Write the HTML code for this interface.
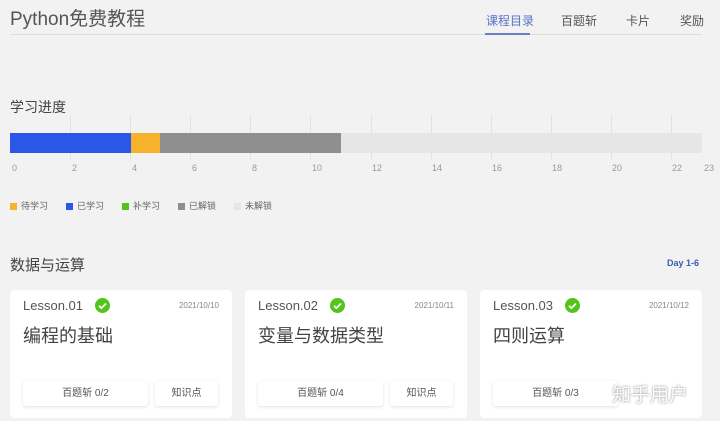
<!DOCTYPE html>
<html><head><meta charset="utf-8"><style>
*{margin:0;padding:0;box-sizing:border-box}
body{width:720px;height:421px;background:#f2f2f2;font-family:"Liberation Sans","Noto Sans CJK SC",sans-serif;position:relative;overflow:hidden;color:#333}
.a{position:absolute}
.tab{position:absolute;top:12px;font-size:12px;color:#555}
.tick{position:absolute;top:115px;width:1px;height:45px;background:#e2e2e2}
.num{position:absolute;top:163px;font-size:9px;color:#999}
.leg{position:absolute;top:199px;font-size:9px;color:#666}
.leg i{display:inline-block;width:7px;height:7px;margin-right:4px;vertical-align:-1px}
.card{position:absolute;top:290px;width:222px;height:128px;background:#fff;border-radius:4px}
.card .l{position:absolute;left:13px;top:8px;font-size:13px;color:#555}
.card svg{position:absolute;left:85px;top:8px}
.card .d{position:absolute;right:13px;top:11px;font-size:8px;color:#888}
.card .t{position:absolute;left:13px;top:32px;font-size:18px;color:#444}
.btn{position:absolute;top:91px;height:25px;background:#fff;border-radius:3px;box-shadow:0 1px 3px rgba(0,0,0,.12);font-size:10px;color:#555;text-align:center;line-height:25px}
</style></head><body>
<div class="a" style="left:10px;top:4px;font-size:19px;color:#555">Python免费教程</div>
<div class="a" style="left:10px;top:34px;width:692px;height:1px;background:#ddd"></div>
<div class="tab" style="left:486px;color:#5a72c8">课程目录</div>
<div class="a" style="left:485px;top:33px;width:45px;height:2px;background:#6b7fc8"></div>
<div class="tab" style="left:561px">百题斩</div>
<div class="tab" style="left:626px">卡片</div>
<div class="tab" style="left:680px">奖励</div>
<div class="a" style="left:10px;top:97px;font-size:14px;color:#444">学习进度</div>
<div class="tick" style="left:70px"></div><div class="tick" style="left:130px"></div><div class="tick" style="left:190px"></div><div class="tick" style="left:250px"></div><div class="tick" style="left:310px"></div><div class="tick" style="left:371px"></div><div class="tick" style="left:431px"></div><div class="tick" style="left:491px"></div><div class="tick" style="left:551px"></div><div class="tick" style="left:611px"></div><div class="tick" style="left:671px"></div>
<div class="a" style="left:10px;top:133px;width:692px;height:20px;background:#e6e6e6"></div>
<div class="a" style="left:10px;top:133px;width:121px;height:20px;background:#2b57e8"></div>
<div class="a" style="left:131px;top:133px;width:29px;height:20px;background:#f5b22a"></div>
<div class="a" style="left:160px;top:133px;width:181px;height:20px;background:#8f8f8f"></div>
<div class="num" style="left:12px">0</div><div class="num" style="left:72px">2</div><div class="num" style="left:132px">4</div><div class="num" style="left:192px">6</div><div class="num" style="left:252px">8</div><div class="num" style="left:312px">10</div><div class="num" style="left:372px">12</div><div class="num" style="left:432px">14</div><div class="num" style="left:492px">16</div><div class="num" style="left:552px">18</div><div class="num" style="left:612px">20</div><div class="num" style="left:672px">22</div><div class="num" style="left:704px">23</div>
<div class="leg" style="left:10px"><i style="background:#f5b22a"></i>待学习</div>
<div class="leg" style="left:66px"><i style="background:#2b57e8"></i>已学习</div>
<div class="leg" style="left:122px"><i style="background:#52c41a"></i>补学习</div>
<div class="leg" style="left:178px"><i style="background:#8f8f8f"></i>已解锁</div>
<div class="leg" style="left:234px"><i style="background:#e6e6e6"></i>未解锁</div>
<div class="a" style="left:10px;top:254px;font-size:15px;color:#444">数据与运算</div>
<div class="a" style="left:667px;top:258px;font-size:9px;color:#3a5bb8;font-weight:bold">Day 1-6</div>
<div class="card" style="left:10px"><div class="l">Lesson.01</div><svg width="15" height="15" viewBox="0 0 15 15"><circle cx="7.5" cy="7.5" r="7.5" fill="#52c41a"/><path d="M4 7.7l2.4 2.4 4.6-4.6" stroke="#fff" stroke-width="1.8" fill="none"/></svg><div class="d">2021/10/10</div><div class="t">编程的基础</div><div class="btn" style="left:13px;width:125px">百题斩 0/2</div><div class="btn" style="left:145px;width:63px">知识点</div></div>
<div class="card" style="left:245px"><div class="l">Lesson.02</div><svg width="15" height="15" viewBox="0 0 15 15"><circle cx="7.5" cy="7.5" r="7.5" fill="#52c41a"/><path d="M4 7.7l2.4 2.4 4.6-4.6" stroke="#fff" stroke-width="1.8" fill="none"/></svg><div class="d">2021/10/11</div><div class="t">变量与数据类型</div><div class="btn" style="left:13px;width:125px">百题斩 0/4</div><div class="btn" style="left:145px;width:63px">知识点</div></div>
<div class="card" style="left:480px"><div class="l">Lesson.03</div><svg width="15" height="15" viewBox="0 0 15 15"><circle cx="7.5" cy="7.5" r="7.5" fill="#52c41a"/><path d="M4 7.7l2.4 2.4 4.6-4.6" stroke="#fff" stroke-width="1.8" fill="none"/></svg><div class="d">2021/10/12</div><div class="t">四则运算</div><div class="btn" style="left:13px;width:125px">百题斩 0/3</div></div>
<div class="a" style="left:612px;top:380px;font-size:19px;color:rgba(255,255,255,.95);text-shadow:0 0 2px rgba(0,0,0,.5)">知乎用户</div>
</body></html>
